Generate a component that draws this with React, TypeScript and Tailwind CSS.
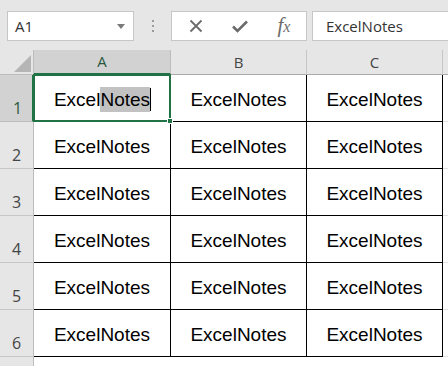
import React from "react";

const rows = [1, 2, 3, 4, 5, 6];
const cols = ["A", "B", "C"];

const uiFont = { fontFamily: '"Open Sans", "Noto Sans", sans-serif' };

export default function App() {
  return (
    <div className="w-[448px] h-[366px] overflow-hidden bg-white select-none">
      {/* --- formula bar --- */}
      <div className="h-[50px] bg-[#e6e6e6] flex items-start pt-[11px] pl-[7px]" style={uiFont}>
        <div className="w-[127px] h-[30px] bg-white border border-[#c6c6c6] flex items-center justify-between pl-[7px] pr-[8px]">
          <span className="text-[15px] text-[#333]">A1</span>
          <svg width="8" height="5" viewBox="0 0 8 5">
            <path d="M0 0h8L4 5z" fill="#7a7a7a" />
          </svg>
        </div>
        <div className="w-[37px] h-[30px] flex flex-col items-center justify-center gap-[3px]">
          <span className="w-[2px] h-[2px] bg-[#9a9a9a]" />
          <span className="w-[2px] h-[2px] bg-[#9a9a9a]" />
          <span className="w-[2px] h-[2px] bg-[#9a9a9a]" />
        </div>
        <div className="w-[136px] h-[30px] bg-white border border-[#c6c6c6] flex items-center">
          <div className="w-[46px] flex justify-center pl-[2px]">
            <svg width="14" height="14" viewBox="0 0 14 14">
              <path d="M1.5 1.5l11 11M12.5 1.5l-11 11" stroke="#6b6b6b" strokeWidth="1.8" />
            </svg>
          </div>
          <div className="w-[44px] flex justify-center">
            <svg width="16" height="13" viewBox="0 0 16 13">
              <path d="M1 6.5l4.5 4.5L15 1.5" stroke="#6b6b6b" strokeWidth="2.6" fill="none" />
            </svg>
          </div>
          <div className="flex-1 flex justify-center pb-[2px]">
            <span className="text-[21px] italic text-[#6b6b6b] leading-none" style={{ fontFamily: '"Liberation Serif", serif' }}>
              f<span className="text-[16px]">x</span>
            </span>
          </div>
        </div>
        <div className="ml-[5px] flex-1 h-[30px] bg-white border border-[#c6c6c6] border-r-0 flex items-center pl-[13px]">
          <span className="text-[15px] text-[#333]">ExcelNotes</span>
        </div>
      </div>

      {/* --- grid --- */}
      <div className="grid grid-cols-[34px_137px_136px_136px_1fr] grid-rows-[25px_repeat(6,47px)_1fr] h-[316px]">
        {/* corner */}
        <div className="bg-[#e6e6e6] border-b border-r border-[#bdbdbd] flex items-end justify-end p-[2px]">
          <svg width="17" height="17" viewBox="0 0 17 17">
            <path d="M17 0v17H0z" fill="#b5b5b5" />
          </svg>
        </div>
        {cols.map((c) => (
          <div
            key={c}
            className={
              c === "A"
                ? "bg-[#d2d2d2] border-b-2 border-b-[#217346] border-r border-r-[#bdbdbd] flex items-center justify-center text-[15px] text-[#2a5a40]"
                : "bg-[#e6e6e6] border-b border-b-[#ababab] border-r border-r-[#c6c6c6] flex items-center justify-center text-[15px] text-[#444]"
            }
            style={uiFont}
          >
            {c}
          </div>
        ))}
        <div className="bg-[#e6e6e6] border-b border-[#ababab]" />

        {rows.map((r) => (
          <React.Fragment key={r}>
            <div
              className={
                r === 1
                  ? "bg-[#d2d2d2] border-r-2 border-r-[#217346] border-b border-b-[#bdbdbd] flex items-end justify-center pb-[1px] pl-[3px] text-[16px] text-[#2a5a40]"
                  : "bg-[#e6e6e6] border-r border-r-[#bdbdbd] border-b border-b-[#c6c6c6] flex items-end justify-center pb-[1px] text-[16px] text-[#444]"
              }
              style={uiFont}
            >
              {r}
            </div>
            {cols.map((c) => {
              const active = r === 1 && c === "A";
              return (
                <div
                  key={c}
                  className={
                    active
                      ? "relative border-2 border-[#217346] -ml-[1px] -mt-[1px] pt-[5px] flex items-center justify-center text-[19px] text-black"
                      : "border-r border-b border-black pt-[4px] flex items-center justify-center text-[19px] text-black"
                  }
                  style={{ fontFamily: '"Liberation Sans", Arial, sans-serif' }}
                >
                  {active ? (
                    <>
                      <span className="pl-[1px]">
                        Excel
                        <span className="bg-[#c2c2c2] py-[2px]">Notes</span>
                        <span className="inline-block w-[1px] h-[23px] bg-black align-[-5px]" />
                      </span>
                      <span className="absolute -right-[4px] -bottom-[4px] w-[6px] h-[6px] bg-[#217346] border border-white" />
                    </>
                  ) : (
                    "ExcelNotes"
                  )}
                </div>
              );
            })}
            <div className="bg-white border-b border-[#e2e2e2]" />
          </React.Fragment>
        ))}

        <div className="bg-[#e6e6e6] border-r border-[#bdbdbd]" />
        <div className="col-span-4 bg-white" />
      </div>
    </div>
  );
}
